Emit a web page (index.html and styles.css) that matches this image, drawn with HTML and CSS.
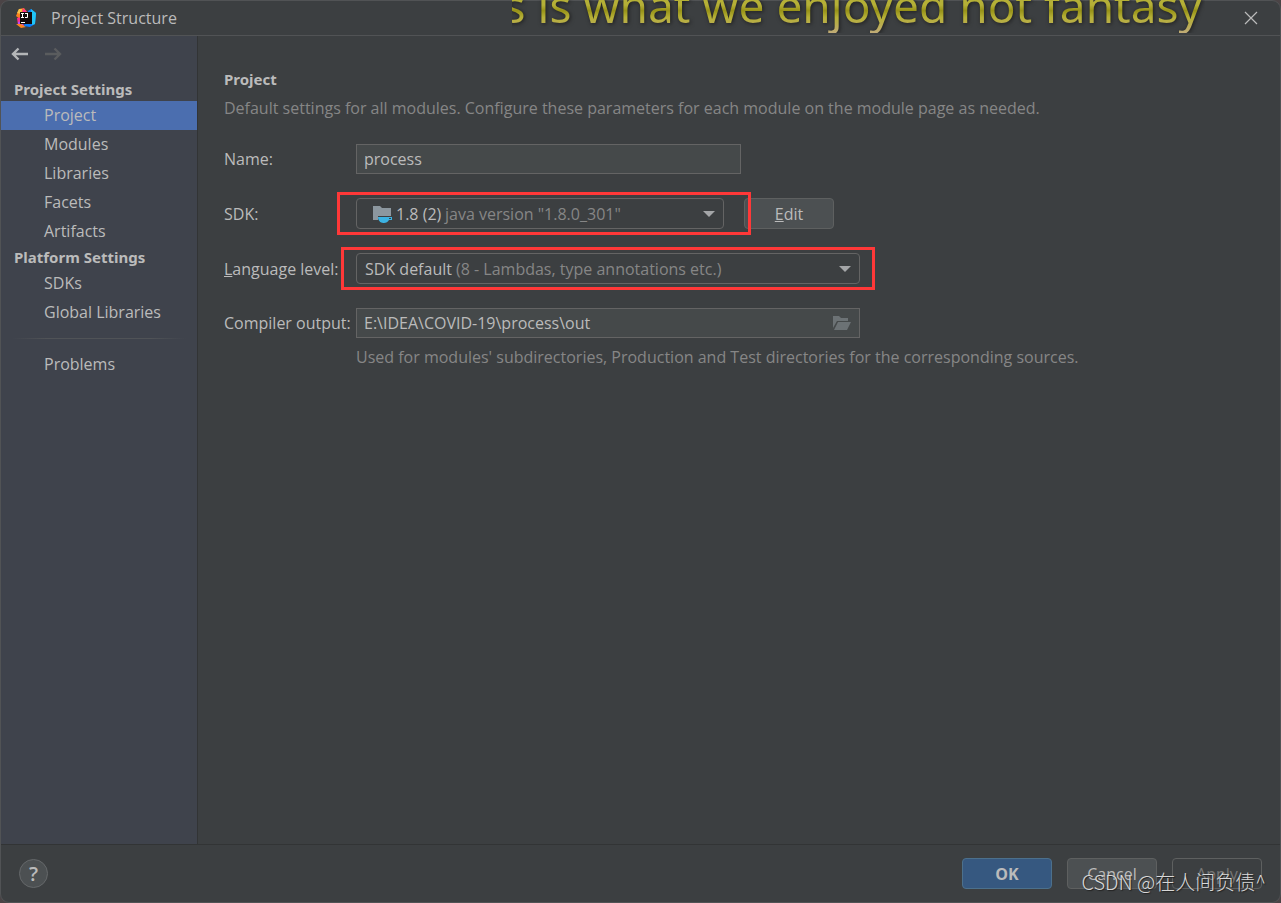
FILE: index.html
```html
<!DOCTYPE html>
<html lang="en">
  <head>
    <meta charset="utf-8" />
    <meta name="viewport" content="width=device-width, initial-scale=1.0" />
    <link rel="stylesheet" href="styles.css">
    <title>Project Structure</title>
  </head>

  <body>
    <div class="dialog">
      <header class="titlebar">
        <svg class="logo" width="20" height="20" viewBox="0 0 20 20" aria-hidden="true">
          <path fill="#fc801d" d="M3 1 8 0 11 4 5 12 0 8z" />
          <path fill="#f5c54b" d="M3 1 6 1 5 6 1 5z" />
          <path fill="#fe2f8e" d="M7 0 11 4 6 6zM1 10 6 9 8 19 2 17z" />
          <path fill="#b74af7" d="M2 14 6 13 8 19 2 17z" />
          <path fill="#fc801d" d="M0 16h5l5 3-5 1z" />
          <path fill="#087cfa" d="M12 3 15 1 20 5 19 16 14 19 8 18z" />
          <path fill="#21c5f5" d="M15 1 20 5 19 16 16 17z" />
          <path fill="#120a0c" d="M4 4h12v12H4z" />
          <path fill="none" stroke="#fff" d="M5 5.500h3M6.500 5.500v4M5 9.500h3M9 5.500h3M11.500 5.500v4h-2.500M5 14.500h4" />
        </svg>
        <h1>Project Structure</h1>
        <button class="close" aria-label="Close">
          <svg width="14" height="14" viewBox="0 0 14 14">
            <path fill="none" stroke="#bbb" stroke-width="1.2" d="M1 1l12 12M13 1L1 13" />
          </svg>
        </button>
      </header>

      <div class="content">
        <aside class="sidebar">
          <div class="history">
            <button aria-label="Back">
              <svg width="18" height="14" viewBox="0 0 18 14">
                <path fill="none" stroke="#b4b6b8" stroke-width="2.4" d="M17 7H2M7.500 1.500L2 7l5.500 5.500" />
              </svg>
            </button>
            <button aria-label="Forward" disabled>
              <svg width="18" height="14" viewBox="0 0 18 14">
                <path fill="none" stroke="#5a5c5e" stroke-width="2.4" d="M1 7h15M10.500 1.500L16 7l-5.500 5.500" />
              </svg>
            </button>
          </div>
          <nav>
            <h2>Project Settings</h2>
            <a class="active" href="#project">Project</a>
            <a href="#modules">Modules</a>
            <a href="#libraries">Libraries</a>
            <a href="#facets">Facets</a>
            <a href="#artifacts">Artifacts</a>
            <h2>Platform Settings</h2>
            <a href="#sdks">SDKs</a>
            <a href="#global-libraries">Global Libraries</a>
            <hr />
            <a href="#problems">Problems</a>
          </nav>
        </aside>

        <main class="panel" id="project">
          <h2>Project</h2>
          <p class="muted">Default settings for all modules. Configure these parameters for each module on the module page as needed.</p>

          <form class="settings">
            <label for="name">Name:</label>
            <div class="field">
              <input class="name" id="name" type="text" value="process" />
            </div>

            <label for="sdk">SDK:</label>
            <div class="field">
              <div class="combo sdk marked">
                <select id="sdk">
                  <option>1.8 (2)</option>
                </select>
                <svg class="sdk-icon" width="20" height="18" viewBox="0 0 20 18" aria-hidden="true">
                  <path fill="#8c979f" d="M0 1h7l2 2h9v8H5v4H0z" />
                  <path fill="#3cb2e2" d="M5 12h14v3h-3c-1 2-3 3-5 3s-6-1-6-6zM16 13v1h2v-1z" />
                </svg>
                <span class="note">java version "1.8.0_301"</span>
                <span class="arrow"></span>
              </div>
              <button class="btn" type="button"><u>E</u>dit</button>
            </div>

            <label for="level"><u>L</u>anguage level:</label>
            <div class="field">
              <div class="combo level marked">
                <select id="level">
                  <option>SDK default</option>
                </select>
                <span class="note">(8 - Lambdas, type annotations etc.)</span>
                <span class="arrow"></span>
              </div>
            </div>

            <label for="output">Compiler output:</label>
            <div class="field">
              <div class="path">
                <input id="output" type="text" value="E:\IDEA\COVID-19\process\out" />
                <button type="button" aria-label="Browse">
                  <svg width="20" height="14" viewBox="0 0 20 14">
                    <path fill="#6c7275" d="M1 0h6l2 2h7v3H5l-4 7zM6 6h13l-4 8H2z" />
                  </svg>
                </button>
              </div>
            </div>
            <p class="hint muted">Used for modules' subdirectories, Production and Test directories for the corresponding sources.</p>
          </form>
        </main>
      </div>

      <footer class="buttons">
        <button class="help" aria-label="Help">?</button>
        <button class="btn primary">OK</button>
        <button class="btn">Cancel</button>
        <button class="btn" disabled>Apply</button>
      </footer>
    </div>

    <div class="lyrics"><span>s is what we enjoyed not fantasy</span></div>
    <div class="watermark">CSDN @在人间负债^</div>
  </body>
</html>
```

FILE: styles.css
```css
* {
  box-sizing: border-box;
}

body {
  margin: 0;
  min-height: 100vh;
  display: flex;
  background: #4b4446;
  color: #bbb;
  font-family: "Open Sans", "Noto Sans CJK SC", sans-serif;
  font-size: 16px;
  line-height: 20px;
}

h1,
h2,
p {
  margin: 0;
  font-size: 16px;
}

h1 {
  font-weight: 400;
}

h2 {
  font-family: "Noto Sans", sans-serif;
  font-size: 15px;
}

button,
input,
select {
  font: inherit;
  color: inherit;
}

button {
  padding: 0;
  border: 0;
  background: none;
}

.dialog {
  flex: 1;
  display: flex;
  flex-direction: column;
  overflow: hidden;
  border: 1px solid #515355;
  border-radius: 9px;
  background: #3c3f41;
}

.titlebar {
  display: flex;
  align-items: center;
  gap: 15px;
  height: 35px;
  padding: 0 22px 0 15px;
  border-bottom: 1px solid #515355;
}

.close {
  display: flex;
  margin-left: auto;
}

.content {
  flex: 1;
  display: flex;
}

.sidebar {
  width: 197px;
  flex: none;
  background: #3f434c;
  border-right: 1px solid #323435;
}

.history {
  display: flex;
  gap: 15px;
  height: 42px;
  padding: 11px 10px;
}

.history button {
  display: flex;
  height: 14px;
}

.sidebar h2 {
  padding: 1px 13px 2px;
}

.sidebar a {
  display: block;
  padding: 4px 0 5px 43px;
  color: inherit;
  text-decoration: none;
  white-space: nowrap;
}

.sidebar a.active {
  background: #4b6eaf;
}

.sidebar hr {
  height: 1px;
  margin: 11px;
  border: 0;
  background: linear-gradient(to right, transparent, #505357 20%, #505357 80%, transparent);
}

.panel {
  flex: 1;
  padding: 33px 26px;
}

.panel h2 {
  margin-bottom: 9px;
}

.muted,
.note {
  color: #868686;
}

.settings {
  display: grid;
  grid-template-columns: 132px 1fr;
  align-items: center;
  row-gap: 24px;
  margin-top: 26px;
}

.settings label {
  white-space: nowrap;
}

.field {
  display: flex;
  gap: 20px;
}

.field input {
  height: 30px;
  padding: 0 7px;
  border: 1px solid #646464;
  background: #45494a;
}

.field .name {
  width: 385px;
}

.hint {
  grid-column: 2;
  margin-top: -15px;
}

.combo {
  position: relative;
  display: grid;
  align-items: center;
}

.combo > * {
  grid-area: 1 / 1;
  pointer-events: none;
}

.combo select {
  appearance: none;
  width: 100%;
  height: 31px;
  padding: 0 8px;
  border: 1px solid #646464;
  border-radius: 4px;
  background: #3c3f41;
  pointer-events: auto;
}

.sdk {
  width: 368px;
}

.sdk select {
  padding-left: 39px;
}

.sdk .note {
  padding-left: 89px;
}

.sdk-icon {
  margin-left: 17px;
}

.level {
  width: 504px;
}

.level .note {
  padding-left: 100px;
}

.arrow {
  justify-self: end;
  margin-right: 9px;
  border: 6px solid transparent;
  border-top-color: #a4a6a8;
  border-bottom: 0;
}

/* red highlight drawn round a combo box */
.marked::after {
  content: "";
  position: absolute;
  z-index: 1;
  inset: -6px -15px;
  border: 3px solid #ff3838;
}

.sdk.marked::after {
  inset: -6px -27px -6px -19px;
}

.path {
  display: flex;
  align-items: center;
  width: 504px;
  border: 1px solid #646464;
  background: #45494a;
}

.path input {
  flex: 1;
  height: 28px;
  border: 0;
}

.path button {
  display: flex;
  margin-right: 7px;
}

.btn {
  width: 90px;
  height: 31px;
  border: 1px solid #5e6060;
  border-radius: 4px;
  background: #4c5052;
}

.btn.primary {
  border-color: #4c708c;
  background: #365880;
  font-weight: 700;
}

.btn:disabled {
  background: none;
  color: #777;
}

.buttons {
  display: flex;
  align-items: center;
  gap: 15px;
  height: 58px;
  padding: 0 18px;
  border-top: 1px solid #323435;
}

.help {
  width: 29px;
  height: 29px;
  margin-right: auto;
  border: 1px solid #65686a;
  border-radius: 50%;
  background: #4c5052;
  font-size: 20px;
  font-weight: 600;
}

/* desktop lyrics floating over the window */
.lyrics {
  position: absolute;
  top: 0;
  right: 76px;
  width: 693px;
  height: 33px;
  display: flex;
  justify-content: flex-end;
  align-items: flex-end;
  overflow: hidden;
  pointer-events: none;
}

.lyrics span {
  flex: none;
  padding-right: 3px;
  background: linear-gradient(#b5b037 50%, #989318 60%, #b5b037 72%, #b9ad4c 84%, #c0ab78);
  background-clip: text;
  color: transparent;
  filter: drop-shadow(1px 1px 2px #1c1c1c);
  font-family: "Noto Sans", sans-serif;
  font-size: 46px;
  line-height: 56px;
}

.watermark {
  position: absolute;
  right: 15px;
  bottom: 7px;
  color: #d8d8d8;
  font-family: "Noto Sans CJK SC", sans-serif;
  font-size: 20px;
  font-weight: 300;
  line-height: 28px;
  text-shadow: 1px 1px 1px #222;
  pointer-events: none;
}
```
